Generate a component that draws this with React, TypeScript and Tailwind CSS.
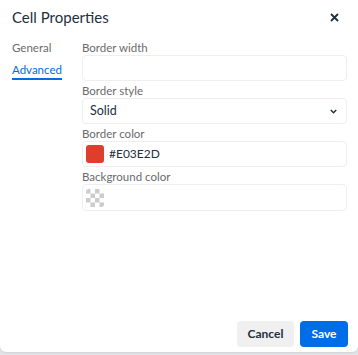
import React from "react";

function Field({ label, children }: { label: string; children: React.ReactNode }) {
  return (
    <div className="flex flex-col">
      <div className="h-[17px] text-[11.5px] leading-[20px] text-[#6b6b6b] overflow-visible">{label}</div>
      {children}
    </div>
  );
}

export default function App() {
  return (
    <div
      className="w-[358px] h-[355px] bg-[#e2e4e7]"
      style={{ fontFamily: 'Lato, "Noto Sans", sans-serif' }}
    >
      <div className="h-[352px] bg-white rounded-b-[6px] flex flex-col shadow-[0_1px_2px_rgba(0,0,0,0.08)]">
        <div className="h-[38px] flex items-center justify-between pl-[12px] pr-[19px] pb-[4px]">
          <div className="text-[15px] text-[#222f3e] leading-none">Cell Properties</div>
          <svg width="9" height="9" viewBox="0 0 9 9">
            <path d="M1 1 L8 8 M8 1 L1 8" stroke="#222f3e" strokeWidth="1.8" strokeLinecap="butt" />
          </svg>
        </div>
        <div className="flex flex-1">
          <div className="w-[82px] shrink-0 pl-[12px] flex flex-col items-start pt-[1px]">
            <div className="text-[11.5px] leading-[18px] text-[#6b6b6b]">General</div>
            <div className="mt-[4px] text-[11.5px] leading-[17px] text-[#006ce7] border-b-[2px] border-[#006ce7]">
              Advanced
            </div>
          </div>
          <div className="flex-1 pr-[11px] flex flex-col">
            <Field label="Border width">
              <div className="h-[26px] border border-[#eeeeee] rounded-[4px]" />
            </Field>
            <Field label="Border style">
              <div className="h-[26px] border border-[#eeeeee] rounded-[4px] flex items-center justify-between pl-[7px] pr-[9px]">
                <span className="text-[12.5px] text-[#222f3e]">Solid</span>
                <svg width="7" height="5" viewBox="0 0 7 5">
                  <path d="M0.8 1 L3.5 3.7 L6.2 1" stroke="#222f3e" strokeWidth="1.5" fill="none" />
                </svg>
              </div>
            </Field>
            <Field label="Border color">
              <div className="h-[26px] border border-[#eeeeee] rounded-[4px] flex items-center pl-[3px]">
                <div className="w-[18px] h-[18px] rounded-[3px] bg-[#e03e2d]" />
                <span className="ml-[5px] text-[12px] text-[#222f3e]">#E03E2D</span>
              </div>
            </Field>
            <Field label="Background color">
              <div className="h-[27px] border border-[#eeeeee] rounded-[4px] flex items-center pl-[3px]">
                <div className="w-[18px] h-[18px] rounded-[3px] overflow-hidden">
                  <svg width="18" height="18" viewBox="0 0 18 18">
                    <rect width="18" height="18" fill="#ffffff" />
                    <g fill="#cccccc">
                      <rect x="0" y="0" width="4.5" height="4.5" />
                      <rect x="9" y="0" width="4.5" height="4.5" />
                      <rect x="4.5" y="4.5" width="4.5" height="4.5" />
                      <rect x="13.5" y="4.5" width="4.5" height="4.5" />
                      <rect x="0" y="9" width="4.5" height="4.5" />
                      <rect x="9" y="9" width="4.5" height="4.5" />
                      <rect x="4.5" y="13.5" width="4.5" height="4.5" />
                      <rect x="13.5" y="13.5" width="4.5" height="4.5" />
                    </g>
                  </svg>
                </div>
              </div>
            </Field>
          </div>
        </div>
        <div className="flex justify-end gap-[6px] pr-[10px] pb-[5px]">
          <button className="w-[57px] h-[26px] rounded-[4px] bg-[#f0f0f0] text-[12px] font-bold text-[#222f3e]">
            Cancel
          </button>
          <button className="w-[48px] h-[26px] rounded-[4px] bg-[#006ce7] text-[12px] font-bold text-white">
            Save
          </button>
        </div>
      </div>
    </div>
  );
}
